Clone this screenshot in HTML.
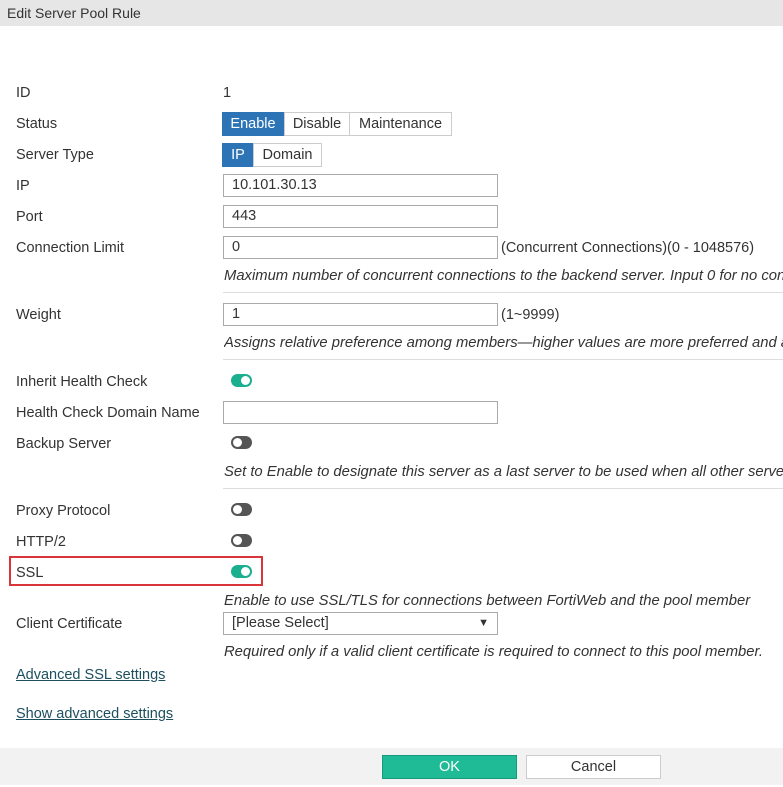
<!DOCTYPE html>
<html><head><style>
*{margin:0;padding:0;box-sizing:border-box}
html,body{overflow:hidden}
body{width:783px;height:787px;background:#fff;font-family:"Liberation Sans",sans-serif;font-size:14.5px;color:#333;position:relative;overflow:hidden}
.a{position:absolute;white-space:nowrap}
.lbl{left:16px}
.t{position:absolute;line-height:16px}
.inp{position:absolute;left:223px;width:275px;height:23px;border:1px solid #aaa;background:#fff;padding-left:8px;line-height:21px}
.clip{position:absolute;left:224px;width:559px;height:20px;overflow:hidden}
.d{font-style:italic;white-space:nowrap;color:#333;line-height:16px;font-size:14.8px}
.sep{position:absolute;left:223px;width:560px;height:1px;background:#ddd}
.tg{position:absolute;left:231px;width:21px;height:13px;border-radius:7px}
.tg.on{background:#1aaf8e}
.tg.off{background:#555}
.tg::after{content:"";position:absolute;top:2px;width:9px;height:9px;border-radius:50%;background:#fff}
.tg.on::after{right:2px}
.tg.off::after{left:2px}
.btn{position:absolute;height:24px;border:1px solid #ccc;line-height:22px;text-align:center;background:#fff}
.sel{background:#2d74b6;color:#fff;border-color:#2d74b6}
a{color:#1d4f5e;text-decoration:underline}
</style></head><body>
<div class="a" style="left:0;top:0;width:783px;height:26px;background:#e6e6e6"></div>
<div class="a" style="left:7px;top:5px;font-size:14px">Edit Server Pool Rule</div>

<div class="t a lbl" style="top:85px">ID</div><div class="t a" style="left:223px;top:85px">1</div>
<div class="t a lbl" style="top:116px">Status</div>
<div class="btn sel" style="left:222px;top:112px;width:62px">Enable</div>
<div class="btn" style="left:284px;top:112px;width:66px">Disable</div>
<div class="btn" style="left:349px;top:112px;width:103px">Maintenance</div>
<div class="t a lbl" style="top:147px">Server Type</div>
<div class="btn sel" style="left:222px;top:143px;width:32px">IP</div>
<div class="btn" style="left:253px;top:143px;width:69px">Domain</div>
<div class="t a lbl" style="top:178px">IP</div><div class="inp" style="top:174px">10.101.30.13</div>
<div class="t a lbl" style="top:209px">Port</div><div class="inp" style="top:205px">443</div>
<div class="t a lbl" style="top:240px">Connection Limit</div><div class="inp" style="top:236px">0</div>
<div class="t a" style="left:501px;top:240px">(Concurrent Connections)(0 - 1048576)</div>
<div class="clip" style="top:268px"><div class="d">Maximum number of concurrent connections to the backend server. Input 0 for no connection limit.</div></div>
<div class="sep" style="top:292px"></div>
<div class="t a lbl" style="top:307px">Weight</div><div class="inp" style="top:303px">1</div>
<div class="t a" style="left:501px;top:307px">(1~9999)</div>
<div class="clip" style="top:335px"><div class="d">Assigns relative preference among members—higher values are more preferred and are assigned</div></div>
<div class="sep" style="top:359px"></div>
<div class="t a lbl" style="top:374px">Inherit Health Check</div><div class="tg on" style="top:374px"></div>
<div class="t a lbl" style="top:405px">Health Check Domain Name</div><div class="inp" style="top:401px"></div>
<div class="t a lbl" style="top:436px">Backup Server</div><div class="tg off" style="top:436px"></div>
<div class="clip" style="top:464px"><div class="d">Set to Enable to designate this server as a last server to be used when all other servers fail</div></div>
<div class="sep" style="top:488px"></div>
<div class="t a lbl" style="top:503px">Proxy Protocol</div><div class="tg off" style="top:503px"></div>
<div class="t a lbl" style="top:534px">HTTP/2</div><div class="tg off" style="top:534px"></div>
<div class="a" style="left:9px;top:556px;width:254px;height:30px;border:2px solid #d9343a"></div>
<div class="t a lbl" style="top:565px">SSL</div><div class="tg on" style="top:565px"></div>
<div class="clip" style="top:593px"><div class="d">Enable to use SSL/TLS for connections between FortiWeb and the pool member</div></div>
<div class="t a lbl" style="top:616px">Client Certificate</div>
<div class="inp" style="top:612px">[Please Select]<span style="position:absolute;right:8px;top:0;font-size:11px">&#9660;</span></div>
<div class="clip" style="top:644px"><div class="d">Required only if a valid client certificate is required to connect to this pool member.</div></div>
<div class="t a lbl" style="top:667px"><a>Advanced SSL settings</a></div>
<div class="t a lbl" style="top:706px"><a>Show advanced settings</a></div>

<div class="a" style="left:0;top:748px;width:783px;height:37px;background:#f2f2f2"></div>
<div class="btn" style="left:382px;top:755px;width:135px;background:#1fbb96;border-color:#169a7b;color:#fff">OK</div>
<div class="btn" style="left:526px;top:755px;width:135px">Cancel</div>
</body></html>
